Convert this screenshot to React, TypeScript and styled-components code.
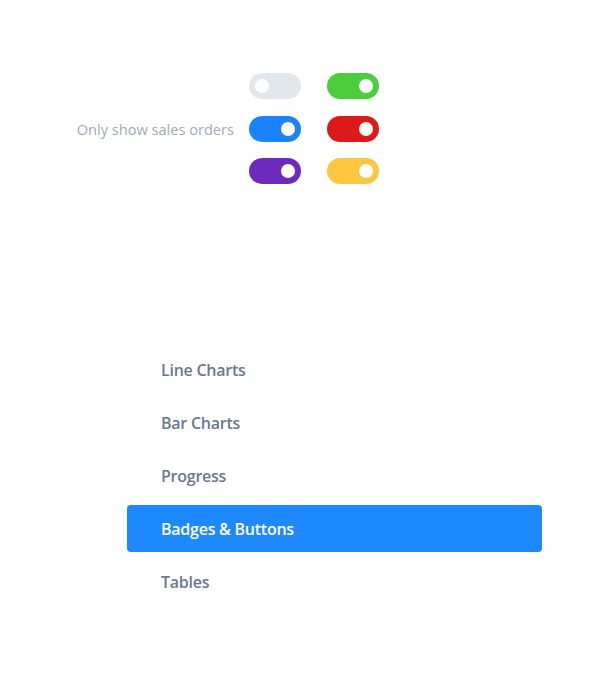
import styled, { createGlobalStyle } from 'styled-components';

const GlobalStyle = createGlobalStyle`
  body {
    margin: 0;
    background: #ffffff;
    font-family: "Open Sans", "Noto Sans", sans-serif;
  }
`;

const Page = styled.div`
  width: 590px;
  height: 694px;
  display: flex;
  flex-direction: column;
`;

const SwitchPanel = styled.div`
  display: flex;
  align-items: center;
  padding-top: 73px;
`;

const Label = styled.span`
  width: 234px;
  padding-right: 15px;
  text-align: right;
  font-size: 14.6px;
  color: #9eabb8;
`;

const SwitchGrid = styled.div`
  display: grid;
  grid-template-columns: 52px 52px;
  column-gap: 26px;
  row-gap: 16.5px;
`;

const Toggle = styled.button<{ $color: string; $on: boolean }>`
  width: 52px;
  height: 26px;
  border: 0;
  padding: 0 6px;
  border-radius: 13px;
  background: ${({ $color }) => $color};
  display: flex;
  align-items: center;
  justify-content: ${({ $on }) => ($on ? 'flex-end' : 'flex-start')};
  cursor: pointer;
`;

const Knob = styled.span`
  width: 14px;
  height: 14px;
  border-radius: 50%;
  background: #ffffff;
`;

const Nav = styled.nav`
  margin-top: 162px;
  padding-left: 127px;
  display: flex;
  flex-direction: column;
  gap: 6px;
`;

const NavItem = styled.a<{ $active?: boolean }>`
  width: 415px;
  height: 47px;
  box-sizing: border-box;
  padding-left: 34px;
  display: flex;
  align-items: center;
  border-radius: 4px;
  font-size: 16px;
  font-weight: 600;
  letter-spacing: -0.25px;
  color: ${({ $active }) => ($active ? '#ffffff' : '#6b7890')};
  background: ${({ $active }) => ($active ? '#1e88ff' : 'transparent')};
  text-decoration: none;
  cursor: pointer;
`;

const toggles = [
  { color: '#e1e7eb', on: false },
  { color: '#4ccd3b', on: true },
  { color: '#1a84ff', on: true },
  { color: '#dc1a1a', on: true },
  { color: '#6c2bbd', on: true },
  { color: '#ffc73f', on: true },
];

const links = ['Line Charts', 'Bar Charts', 'Progress', 'Badges & Buttons', 'Tables'];

export default function App() {
  return (
    <Page>
      <GlobalStyle />
      <SwitchPanel>
        <Label>Only show sales orders</Label>
        <SwitchGrid>
          {toggles.map((t, i) => (
            <Toggle key={i} $color={t.color} $on={t.on} aria-pressed={t.on}>
              <Knob />
            </Toggle>
          ))}
        </SwitchGrid>
      </SwitchPanel>

      <Nav>
        {links.map((l) => (
          <NavItem key={l} $active={l === 'Badges & Buttons'}>
            {l}
          </NavItem>
        ))}
      </Nav>
    </Page>
  );
}
